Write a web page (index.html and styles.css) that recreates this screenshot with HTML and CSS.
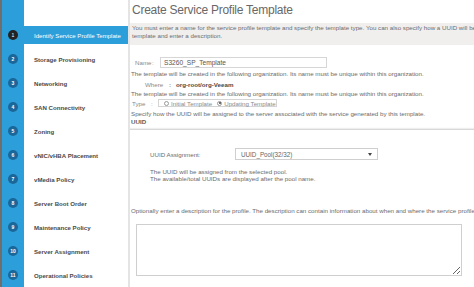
FILE: index.html
```html
<!DOCTYPE html>
<html lang="en">
<head>
  <meta charset="UTF-8">
  <title>Create Service Profile Template</title>
  <link rel="stylesheet" href="styles.css">
</head>
<body>

  <nav class="steps">
    <ol>
      <li class="step active"><span class="num">1</span>Identify Service Profile Template</li>
      <li class="step"><span class="num">2</span>Storage Provisioning</li>
      <li class="step"><span class="num">3</span>Networking</li>
      <li class="step"><span class="num">4</span>SAN Connectivity</li>
      <li class="step"><span class="num">5</span>Zoning</li>
      <li class="step"><span class="num">6</span>vNIC/vHBA Placement</li>
      <li class="step"><span class="num">7</span>vMedia Policy</li>
      <li class="step"><span class="num">8</span>Server Boot Order</li>
      <li class="step"><span class="num">9</span>Maintenance Policy</li>
      <li class="step"><span class="num">10</span>Server Assignment</li>
      <li class="step"><span class="num">11</span>Operational Policies</li>
    </ol>
  </nav>

  <div class="main">
    <h1>Create Service Profile Template</h1>

    <div class="notice">
      <p>You must enter a name for the service profile template and specify the template type. You can also specify how a UUID will be assigned to this</p>
      <p>template and enter a description.</p>
    </div>

    <div class="row name-row">
      <span class="key">Name</span><span class="colon">:</span>
      <div class="name-input">S3260_SP_Template</div>
    </div>
    <p class="hint org-hint">The template will be created in the following organization. Its name must be unique within this organization.</p>
    <div class="row where-row">
      <span class="key">Where</span><span class="colon">:</span>
      <b class="org">org-root/org-Veeam</b>
    </div>
    <p class="hint org-hint2">The template will be created in the following organization. Its name must be unique within this organization.</p>
    <div class="row type-row">
      <span class="key">Type</span><span class="colon">:</span>
      <div class="radios">
        <span class="radio"></span>Initial Template
        <span class="radio checked"></span>Updating Template
      </div>
    </div>
    <p class="hint specify">Specify how the UUID will be assigned to the server associated with the service generated by this template.</p>
    <p class="uuid-title">UUID</p>

    <div class="uuid">
      <div class="uuid-row">
        <span class="uuid-label">UUID Assignment:</span>
        <div class="select">UUID_Pool(32/32)<span class="caret"></span></div>
      </div>
      <p class="uuid-note">The UUID will be assigned from the selected pool.<br>The available/total UUIDs are displayed after the pool name.</p>
    </div>

    <p class="hint desc">Optionally enter a description for the profile. The description can contain information about when and where the service profile should be used.</p>
    <textarea class="desc-box"></textarea>
  </div>

</body>
</html>
```

FILE: styles.css
```css
body{
  margin: 0;
  width: 474px;
  height: 287px;
  overflow: hidden;
  display: flex;
  background: #fff;
  font-family: "Liberation Sans", Arial, sans-serif;
}
p{
  margin: 0;
}

/* wizard steps */
.steps{
  flex: none;
  width: 126px;
  border-left: 2px solid #6e6e6e;
  border-right: 2px solid #e4e4e4;
  background: linear-gradient(to right, #2c9fda 22px, #fff 22px);
  padding-top: 26px;
}
.steps ol{
  list-style: none;
  margin: 0;
  padding: 0;
  display: flex;
  flex-direction: column;
  gap: 6px;
}
.step{
  height: 18px;
  display: flex;
  align-items: center;
  font-size: 6.1px;
  font-weight: bold;
  color: #4a4a4a;
  white-space: nowrap;
}
.num{
  flex: none;
  width: 10px;
  height: 10px;
  margin: 0 16px 0 6px;
  border-radius: 50%;
  background: #1b679a;
  color: #fff;
  font-size: 5px;
  display: flex;
  align-items: center;
  justify-content: center;
}
.step.active{
  background: #2c9fda;
  color: #fff;
  font-weight: normal;
}
.step.active .num{
  background: #232323;
}

/* main panel */
.main{
  flex: 1;
  min-width: 0;
  overflow: hidden;
  color: #6b6b6b;
  font-size: 6.2px;
  white-space: nowrap;
}
.main h1{
  margin: 0 0 0 2px;
  height: 23px;
  font-size: 12px;
  line-height: 20px;
  font-weight: normal;
  letter-spacing: -0.25px;
  color: #686868;
}
.notice{
  height: 22px;
  box-sizing: border-box;
  padding: 1px 0 0 2px;
  background: #f1efee;
  line-height: 8px;
}
.row{
  display: flex;
  align-items: center;
}
.key{
  color: #8a8a8a;
}
.colon{
  color: #8a8a8a;
}
.name-row{
  margin-top: 11px;
  height: 12px;
  padding-left: 5px;
}
.name-row .key{
  width: 17px;
}
.name-row .colon{
  width: 8px;
}
.name-input{
  width: 167px;
  height: 11px;
  box-sizing: border-box;
  padding-left: 3px;
  border: 1px solid #d6d6d6;
  font-size: 6.6px;
  line-height: 9px;
  color: #555;
}
.hint{
  padding-left: 1px;
}
.org-hint{
  line-height: 11px;
}
.where-row{
  height: 10px;
  padding-left: 15px;
}
.where-row .key{
  width: 24px;
}
.where-row .colon{
  width: 7px;
  font-weight: bold;
}
.org{
  color: #4a4a4a;
}
.org-hint2{
  line-height: 9px;
}
.type-row{
  height: 10px;
  padding-left: 2px;
}
.type-row .key{
  width: 19px;
}
.type-row .colon{
  width: 7px;
}
.radios{
  width: 119px;
  height: 8px;
  box-sizing: border-box;
  border: 1px solid #d4d4d4;
  display: flex;
  align-items: center;
  color: #8a8a8a;
}
.radio{
  width: 5px;
  height: 5px;
  box-sizing: border-box;
  margin: 0 2px 0 5px;
  border: 1px solid #9a9a9a;
  border-radius: 50%;
  position: relative;
}
.radio.checked::after{
  content: "";
  position: absolute;
  left: 0.5px;
  top: 0.5px;
  width: 2px;
  height: 2px;
  border-radius: 50%;
  background: #444;
}
.specify{
  margin-top: 1px;
  line-height: 9px;
}
.uuid-title{
  padding-left: 1px;
  line-height: 8px;
  font-weight: bold;
  color: #5a5a5a;
}

/* uuid section */
.uuid{
  margin-top: 3px;
  border-top: 1px solid #d8d8d8;
  box-shadow: 0 -1px 1px #eee;
  padding-left: 20px;
}
.uuid-row{
  margin-top: 18px;
  height: 12px;
  display: flex;
  align-items: center;
}
.uuid-label{
  width: 85px;
}
.select{
  width: 143px;
  height: 12px;
  box-sizing: border-box;
  border: 1px solid #cfcfcf;
  padding-left: 5px;
  display: flex;
  align-items: center;
  justify-content: space-between;
  font-size: 6.3px;
  color: #666;
}
.caret{
  margin-right: 5px;
  border-left: 2px solid transparent;
  border-right: 2px solid transparent;
  border-top: 3px solid #444;
}
.uuid-note{
  margin-top: 8px;
  line-height: 7px;
}
.desc{
  margin-top: 25px;
  line-height: 8px;
}
.desc-box{
  display: block;
  width: 326px;
  height: 52px;
  box-sizing: border-box;
  margin: 9px 0 0 6px;
  border: 1px solid #cfcfcf;
  border-radius: 0;
  padding: 0;
}
```
